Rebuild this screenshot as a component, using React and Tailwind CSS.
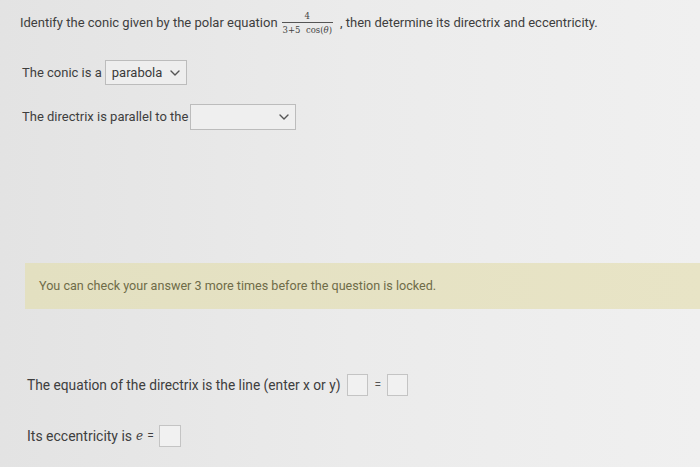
import React from "react";

function Chevron({ className = "" }) {
  return (
    <svg width="10" height="6" viewBox="0 0 10 6" className={className} fill="none" stroke="#555" strokeWidth="1.4" strokeLinecap="round" strokeLinejoin="round">
      <path d="M1 1l4 4 4-4" />
    </svg>
  );
}

export default function App() {
  return (
    <div className="w-[700px] h-[467px] overflow-hidden bg-gradient-to-r from-[#e3e3e3] via-[#ebebeb] to-[#f0f0f0] font-['Roboto',sans-serif] text-[#3e3e3e]">
      <div className="flex items-center pl-[20px] pt-[9px] h-[37px] text-[13px]">
        <span>Identify the conic given by the polar equation</span>
        <span className="flex flex-col items-center ml-[4px] mr-[7px] font-['DejaVu_Serif',serif] text-[8.5px] leading-none text-[#444]">
          <span className="pb-[2px]">4</span>
          <span className="border-t border-[#555] px-[1px] pt-[3px] whitespace-nowrap">
            3+5&nbsp; cos(<i>θ</i>)
          </span>
        </span>
        <span>, then determine its directrix and eccentricity.</span>
      </div>

      <div className="flex items-center pl-[22px] mt-[23px] text-[13px]">
        <span>The conic is a</span>
        <div className="ml-[3px] flex items-center justify-between w-[82px] h-[25px] border border-[#bcbcbc] bg-[#eeeeee] pl-[6px] pr-[6px] text-[13px] text-[#3a3a3a]">
          <span>parabola</span>
          <Chevron />
        </div>
      </div>

      <div className="flex items-center pl-[22px] mt-[19px] text-[13px]">
        <span>The directrix is parallel to the</span>
        <div className="ml-[2px] flex items-center justify-end w-[106px] h-[26px] border border-[#bcbcbc] bg-[#efefef] pr-[6px]">
          <Chevron />
        </div>
      </div>

      <div className="ml-[25px] mt-[133px] h-[46px] flex items-center bg-gradient-to-r from-[#e3e0c1] to-[#e8e4c6] pl-[14px] text-[12.6px] text-[#6f6c48]">
        You can check your answer 3 more times before the question is locked.
      </div>

      <div className="flex items-center pl-[27px] mt-[65px] text-[13.75px]">
        <span>The equation of the directrix is the line (enter x or y)</span>
        <span className="ml-[7px] w-[21px] h-[22px] border border-[#c4c4c4] bg-[#f1f1f1]"></span>
        <span className="mx-[6px] text-[12px] text-[#555]">=</span>
        <span className="w-[21px] h-[22px] border border-[#c4c4c4] bg-[#f1f1f1]"></span>
      </div>

      <div className="flex items-center pl-[27px] mt-[29px] text-[14px]">
        <span>Its eccentricity is</span>
        <i className="ml-[4px] font-['DejaVu_Serif',serif] text-[12px]">e</i>
        <span className="ml-[4px] text-[12px]">=</span>
        <span className="ml-[5px] w-[22px] h-[22px] border border-[#c4c4c4] bg-[#f1f1f1]"></span>
      </div>
    </div>
  );
}
